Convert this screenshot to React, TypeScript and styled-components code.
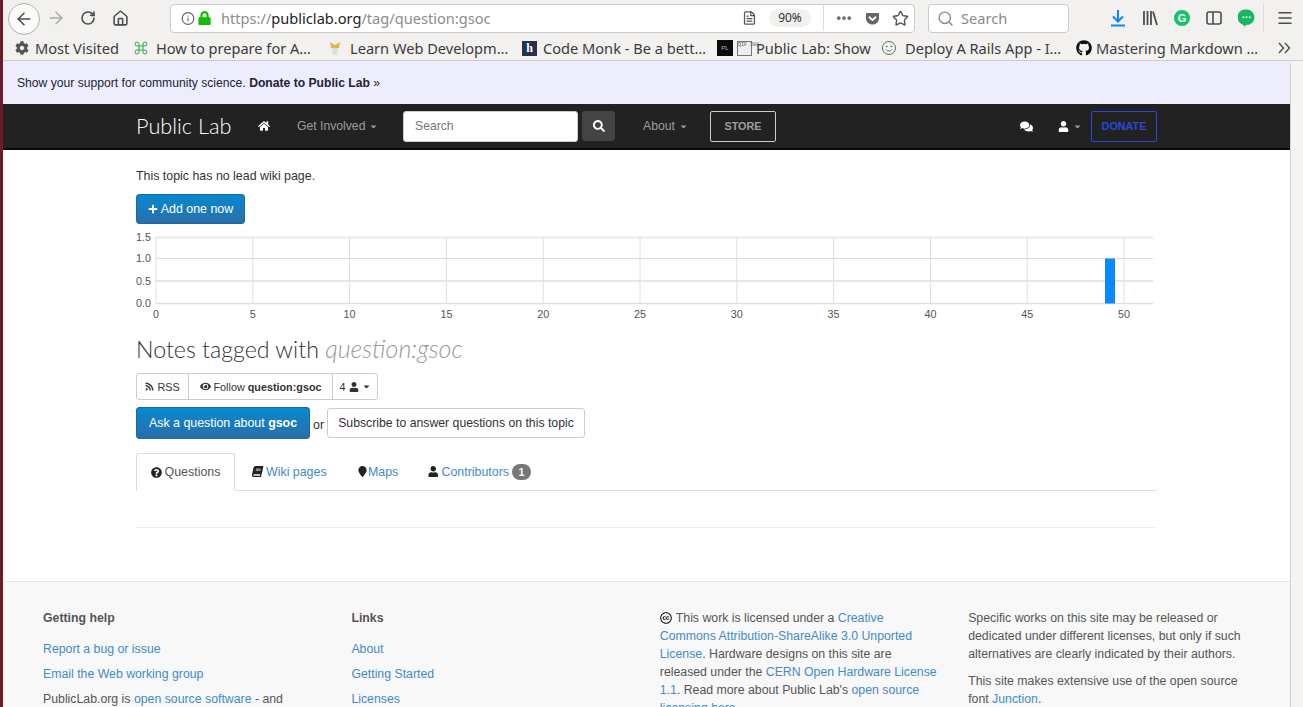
import React from 'react';
import styled, { createGlobalStyle } from 'styled-components';
import {
  FaBook,
  FaCaretDown,
  FaCog,
  FaComments,
  FaCreativeCommons,
  FaEye,
  FaGetPocket,
  FaGithub,
  FaHome,
  FaLock,
  FaMapMarker,
  FaPlus,
  FaQuestionCircle,
  FaRss,
  FaSearch,
  FaUser,
} from 'react-icons/fa';
import { ArrowLeft, ArrowRight, Command, FileText, Home, Info, Menu, MoreHorizontal, RotateCw, Search, Star } from 'lucide-react';

const GlobalStyle = createGlobalStyle`
  html, body {
    margin: 0;
    padding: 0;
    height: 707px;
    overflow: hidden;
    background: #fff;
  }
  * { box-sizing: border-box; }
  a { color: #428bca; text-decoration: none; }
`;

const Screen = styled.div`
  display: flex;
  height: 707px;
  width: 1303px;
  overflow: hidden;
  font-family: 'Liberation Sans', Arial, sans-serif;
  font-size: 12.4px;
  color: #333;
`;

const WindowEdge = styled.div`
  width: 3px;
  flex: none;
  background: #6d1b26;
`;

const Workspace = styled.div`
  flex: 1;
  min-width: 0;
  display: flex;
  flex-direction: column;
`;

/* browser chrome */
const Toolbar = styled.div`
  height: 36px;
  display: flex;
  align-items: center;
  background: #f2f1ef;
  padding-left: 5px;
  color: #4a4a4a;
`;

const BackCircle = styled.div`
  width: 32px;
  height: 32px;
  margin-top: 2px;
  border-radius: 50%;
  border: 1px solid #b5b3b0;
  background: #fbfbfa;
  display: flex;
  align-items: center;
  justify-content: center;
  color: #4a4a4a;
  flex: none;
`;

const ToolIcon = styled.div<{ $w: number; $color?: string }>`
  width: ${(p) => p.$w}px;
  flex: none;
  display: flex;
  justify-content: center;
  align-items: center;
  color: ${(p) => p.$color || '#4d4d4d'};
`;

const UrlBar = styled.div`
  width: 745px;
  height: 29px;
  margin-left: 34px;
  flex: none;
  display: flex;
  align-items: center;
  background: #fff;
  border: 1px solid #cdcbc8;
  border-radius: 4px;
  padding-left: 10px;
  color: #5a5a5a;
`;

const LockIcon = styled(FaLock)`
  margin-left: 3px;
  color: #12bc00;
`;

const UrlText = styled.span`
  font-family: 'Noto Sans', sans-serif;
  font-size: 14.6px;
  color: #8c8c8c;
  margin-left: 10px;
  width: 521px;
  flex: none;
  white-space: nowrap;
  strong { font-weight: 400; color: #222; }
`;

const ZoomPill = styled.span`
  width: 42px;
  height: 18px;
  margin-left: 12px;
  border-radius: 9px;
  background: #f0f0ef;
  font-family: 'Noto Sans', sans-serif;
  font-size: 12px;
  line-height: 18px;
  text-align: center;
  color: #333;
  flex: none;
`;

const UrlDivider = styled.span`
  width: 1px;
  height: 26px;
  background: #dedddb;
  margin: 0 6px 0 12px;
  flex: none;
`;

const SearchBox = styled.div`
  width: 141px;
  height: 29px;
  margin-left: 13px;
  margin-right: 33px;
  flex: none;
  display: flex;
  align-items: center;
  gap: 7px;
  background: #fff;
  border: 1px solid #cdcbc8;
  border-radius: 4px;
  padding-left: 8px;
  font-family: 'Noto Sans', sans-serif;
  font-size: 14.6px;
  color: #8a8a8a;
`;

const ToolDivider = styled.span`
  width: 1px;
  height: 28px;
  background: #dcdbd8;
  margin: 0 5px 0 1px;
  flex: none;
`;

const GrammarlyBadge = styled.span`
  width: 16px;
  height: 16px;
  border-radius: 50%;
  background: #15c26b;
  color: #fff;
  font: bold 11px/16px 'Liberation Sans', sans-serif;
  text-align: center;
`;

const BookmarksBar = styled.div`
  height: 25px;
  display: flex;
  align-items: center;
  background: #f2f1ef;
  border-bottom: 1px solid #cfcdc9;
  padding-left: 12px;
  font-family: 'Noto Sans', sans-serif;
  font-size: 14.6px;
  color: #3b3b3b;
`;

const Bookmark = styled.div<{ $w: number; $gap?: number }>`
  width: ${(p) => p.$w}px;
  flex: none;
  display: flex;
  align-items: center;
  gap: ${(p) => p.$gap ?? 7}px;
  white-space: nowrap;
  overflow: hidden;
`;

const FaviconH = styled.span`
  width: 15px;
  height: 15px;
  background: #27304f;
  color: #fff;
  font: bold 12px/15px 'Liberation Serif', serif;
  text-align: center;
  flex: none;
`;

const FaviconPL = styled.span`
  width: 16px;
  height: 16px;
  background: #0c0c0c;
  color: #bbb;
  font: 6px/16px 'Liberation Sans', sans-serif;
  text-align: center;
  flex: none;
`;

const FaviconQif = styled.span`
  width: 15px;
  height: 15px;
  border: 1px solid #777;
  background: #eee;
  color: #555;
  font: 5px/6px 'Liberation Mono', monospace;
  text-align: center;
  flex: none;
`;

/* page viewport */
const Viewport = styled.div`
  flex: 1;
  min-height: 0;
  display: flex;
`;

const Page = styled.div`
  flex: 1;
  min-width: 0;
  overflow: hidden;
  background: #fff;
`;

const ScrollTrack = styled.div`
  width: 13px;
  flex: none;
  background: #f5f4f2;
  border-left: 1px solid #d3d1cd;
  border-top-left-radius: 4px;
`;

const Banner = styled.div`
  height: 43px;
  background: #eeedfd;
  padding-left: 14px;
  line-height: 44px;
  font-size: 12.15px;
  color: #222238;
`;

const NavBar = styled.nav`
  height: 46px;
  background: #222;
  border-bottom: 2px solid #080808;
  padding-left: 133px;
  display: flex;
  align-items: center;
  color: #9d9d9d;
`;

const Brand = styled.span`
  font-family: Lato, sans-serif;
  font-weight: 300;
  font-size: 21.7px;
  color: #fff;
  width: 122px;
  flex: none;
`;

const NavLink = styled.span<{ $w: number; $end?: boolean; $pad?: number }>`
  width: ${(p) => p.$w}px;
  flex: none;
  display: flex;
  align-items: center;
  justify-content: ${(p) => (p.$end ? 'flex-end' : 'flex-start')};
  padding-right: ${(p) => p.$pad ?? 0}px;
  gap: 4px;
  font-size: 12.2px;
  white-space: nowrap;
`;

const NavSearchInput = styled.div`
  width: 175px;
  height: 31px;
  flex: none;
  background: #fff;
  border: 1px solid #ccc;
  border-radius: 3px;
  padding-left: 11px;
  line-height: 29px;
  font-size: 12.2px;
  color: #777;
`;

const NavSearchButton = styled.div`
  width: 33px;
  height: 30px;
  margin: 0 28px 0 4px;
  flex: none;
  background: #444;
  border-radius: 3px;
  display: flex;
  align-items: center;
  justify-content: center;
  color: #fff;
`;

const OutlineButton = styled.span<{ $color: string; $text: string; $w: number }>`
  width: ${(p) => p.$w}px;
  height: 31px;
  flex: none;
  border: 1px solid ${(p) => p.$color};
  border-radius: 2px;
  color: ${(p) => p.$text};
  font-size: 10.8px;
  font-weight: bold;
  line-height: 29px;
  text-align: center;
`;

const Container = styled.div`
  width: 1021px;
  margin-left: 133px;
`;

const LeadText = styled.p`
  margin: 17px 0 9px;
  line-height: 18px;
`;

const PrimaryButton = styled.span<{ $w: number; $h: number }>`
  display: inline-flex;
  align-items: center;
  justify-content: center;
  gap: 3px;
  width: ${(p) => p.$w}px;
  height: ${(p) => p.$h}px;
  border: 1px solid #1c6aa3;
  border-radius: 3px;
  background: linear-gradient(#0689cf, #2b6ea9);
  color: #fff;
  flex: none;
`;

const ChartSvg = styled.svg`
  display: block;
  width: 1021px;
  height: 95px;
  margin-top: 4px;
  text {
    font-family: 'Liberation Sans', sans-serif;
    font-size: 10.8px;
    fill: #545454;
  }
`;

const Heading = styled.h2`
  margin: 9px 0 0;
  height: 41px;
  font-family: Lato, sans-serif;
  font-weight: 300;
  font-size: 23.2px;
  line-height: 32px;
  color: #333;
  em { color: #999; font-style: italic; font-size: 25px; }
`;

const ButtonGroup = styled.div`
  display: flex;
  height: 27px;
`;

const GroupButton = styled.span<{ $w: number }>`
  width: ${(p) => p.$w}px;
  flex: none;
  display: flex;
  align-items: center;
  justify-content: center;
  gap: 3px;
  font-size: 10.8px;
  color: #333;
  border: 1px solid #ccc;
  margin-left: -1px;
  &:first-child { margin-left: 0; border-radius: 3px 0 0 3px; }
  &:last-child { border-radius: 0 3px 3px 0; }
`;

const AskRow = styled.div`
  display: flex;
  align-items: center;
  margin-top: 7px;
`;

const OrText = styled.span`
  width: 17px;
  margin-top: 3px;
  text-align: center;
  flex: none;
`;

const DefaultButton = styled.span`
  width: 258px;
  height: 30px;
  flex: none;
  border: 1px solid #ccc;
  border-radius: 3px;
  line-height: 28px;
  text-align: center;
  font-size: 12.25px;
`;

const Tabs = styled.div`
  display: flex;
  height: 38px;
  margin-top: 14px;
  width: 1021px;
  border-bottom: 1px solid #ddd;
`;

const Tab = styled.div<{ $active?: boolean; $w: number; $pad?: number; $gap?: number }>`
  width: ${(p) => p.$w}px;
  flex: none;
  height: ${(p) => (p.$active ? '38px' : '37px')};
  display: flex;
  align-items: center;
  justify-content: ${(p) => (p.$active ? 'center' : 'flex-start')};
  padding-left: ${(p) => p.$pad ?? (p.$active ? 0 : 16)}px;
  gap: ${(p) => p.$gap ?? 3}px;
  background: #fff;
  color: #428bca;
  border: 1px solid ${(p) => (p.$active ? '#ddd' : 'transparent')};
  border-bottom-color: ${(p) => (p.$active ? '#fff' : 'transparent')};
  border-radius: 3px 3px 0 0;
  svg { color: #222; }
`;

const SlantedBook = styled(FaBook)`
  transform: skewX(-12deg);
`;

const ActiveTabLabel = styled.span`
  color: #555;
`;

const CountBadge = styled.span`
  min-width: 19px;
  height: 16px;
  border-radius: 8px;
  background: #777;
  color: #fff;
  font-size: 10.8px;
  font-weight: bold;
  line-height: 16px;
  text-align: center;
`;

const Rule = styled.hr`
  border: 0;
  border-top: 1px solid #eee;
  margin: 36px 0 0;
`;

const Footer = styled.footer`
  margin-top: 53px;
  background: #f8f8f8;
  border-top: 1px solid #e7e7e7;
  padding: 27px 0 0 40px;
  display: grid;
  grid-template-columns: repeat(4, 308.4px);
  color: #555;
  font-size: 12.3px;
  line-height: 18px;
`;

const FooterColumn = styled.div`
  padding-right: 27px;
`;

const FooterTitle = styled.div`
  font-weight: bold;
  margin-bottom: 13px;
`;

const FooterLine = styled.div`
  margin-bottom: 7px;
`;

const FooterParagraph = styled.p`
  margin: 0 0 9px;
`;

const CcIcon = styled(FaCreativeCommons)`
  color: #111;
  vertical-align: -2px;
  margin-right: 4px;
`;

const ticks = [0, 5, 10, 15, 20, 25, 30, 35, 40, 45, 50];
const yTicks = [
  { label: '1.5', y: 9.5, width: 2, color: '#e9e9e9' },
  { label: '1.0', y: 30.5, width: 1, color: '#dcdcdc' },
  { label: '0.5', y: 53, width: 2, color: '#e6e6e6' },
  { label: '0.0', y: 75.5, width: 1.5, color: '#dedede' },
];
const tickX = (n: number) => 20 + n * 19.36;

function TagChart() {
  return (
    <ChartSvg viewBox="0 0 1021 95">
      {yTicks.map((t) => (
        <g key={t.label}>
          <line x1={20} x2={1017} y1={t.y} y2={t.y} stroke={t.color} strokeWidth={t.width} />
          <text x={15} y={t.y + 3.5} textAnchor="end">{t.label}</text>
        </g>
      ))}
      {ticks.map((n) => (
        <g key={n}>
          <line x1={tickX(n)} x2={tickX(n)} y1={9} y2={75.5} stroke="#dedede" strokeWidth={1} />
          <text x={tickX(n)} y={90} textAnchor="middle">{n}</text>
        </g>
      ))}
      <rect x={969} y={30.5} width={10} height={45} fill="#0a88ff" />
    </ChartSvg>
  );
}

export default function App() {
  return (
    <>
      <GlobalStyle />
      <Screen>
        <WindowEdge />
        <Workspace>
          <Toolbar>
            <BackCircle><ArrowLeft size={20} strokeWidth={1.8} /></BackCircle>
            <ToolIcon $w={32} $color="#a9a9a9"><ArrowRight size={20} strokeWidth={1.8} /></ToolIcon>
            <ToolIcon $w={32}><RotateCw size={16} strokeWidth={2.4} /></ToolIcon>
            <ToolIcon $w={32}><Home size={17} strokeWidth={2.2} /></ToolIcon>
            <UrlBar>
              <Info size={15} color="#666" />
              <LockIcon size={14} />
              <UrlText>https://<strong>publiclab.org</strong>/tag/question:gsoc</UrlText>
              <FileText size={16} color="#555" />
              <ZoomPill>90%</ZoomPill>
              <UrlDivider />
              <ToolIcon $w={28}><MoreHorizontal size={18} strokeWidth={3} color="#666" /></ToolIcon>
              <ToolIcon $w={28}><FaGetPocket size={15} color="#666" /></ToolIcon>
              <ToolIcon $w={28}><Star size={17} color="#555" strokeWidth={2} /></ToolIcon>
            </UrlBar>
            <SearchBox><Search size={17} color="#8a8a8a" />Search</SearchBox>
            <ToolIcon $w={32} $color="#0a84ff">
              <svg width="16" height="18" viewBox="0 0 16 18" fill="none" stroke="currentColor" strokeWidth="2">
                <path d="M8 1v11M3 7.5l5 5 5-5M1 16.5h14" />
              </svg>
            </ToolIcon>
            <ToolIcon $w={32}>
              <svg width="16" height="16" viewBox="0 0 16 16" fill="none" stroke="currentColor" strokeWidth="1.8">
                <path d="M2 1v14M5.5 1v14M9 1v14M11 1.5l4 13.5" />
              </svg>
            </ToolIcon>
            <ToolIcon $w={32}><GrammarlyBadge>G</GrammarlyBadge></ToolIcon>
            <ToolIcon $w={32}>
              <svg width="16" height="16" viewBox="0 0 16 16" fill="none" stroke="currentColor" strokeWidth="1.6">
                <rect x="1" y="2" width="14" height="12" rx="2" />
                <path d="M7 2v12" />
              </svg>
            </ToolIcon>
            <ToolIcon $w={32} $color="#15b85f">
              <svg width="17" height="18" viewBox="0 0 17 18">
                <path d="M8.5 0.5a8 7.8 0 0 1 0 15.6h-1v2l-3-2.6a8 7.8 0 0 1 4-15z" fill="currentColor" />
                <circle cx="5.3" cy="8.3" r="1" fill="#fff" />
                <circle cx="8.5" cy="8.3" r="1" fill="#fff" />
                <circle cx="11.7" cy="8.3" r="1" fill="#fff" />
              </svg>
            </ToolIcon>
            <ToolDivider />
            <ToolIcon $w={32}><Menu size={18} strokeWidth={2} /></ToolIcon>
          </Toolbar>
          <BookmarksBar>
            <Bookmark $w={118} $gap={6}><FaCog size={14} color="#555" /><span>Most Visited</span></Bookmark>
            <Bookmark $w={194}>
              <Command size={16} color="#3aa757" strokeWidth={1.5} />
              <span>How to prepare for A…</span>
            </Bookmark>
            <Bookmark $w={195}>
              <svg width="16" height="16" viewBox="0 0 16 16">
                <path d="M3 2l5 3 5-3-1 6H4z" fill="#e2b84a" />
                <path d="M5 8h6l-1 7H6z" fill="#dedcd4" />
              </svg>
              <span>Learn Web Developm…</span>
            </Bookmark>
            <Bookmark $w={195} $gap={6}><FaviconH>h</FaviconH><span>Code Monk - Be a bett…</span></Bookmark>
            <Bookmark $w={164} $gap={4}>
              <FaviconPL>PL</FaviconPL>
              <FaviconQif>QIF 388</FaviconQif>
              <span>Public Lab: Show</span>
            </Bookmark>
            <Bookmark $w={195} $gap={8}>
              <svg width="16" height="16" viewBox="0 0 16 16" fill="#bdebd6" stroke="#555" strokeWidth="0.9">
                <circle cx="8" cy="8" r="6.5" fill="#eefaf4" />
                <path d="M5 9.5c1.5 2 4.5 2 6 0" fill="none" />
                <circle cx="5.8" cy="6.5" r="0.5" />
                <circle cx="10.2" cy="6.5" r="0.5" />
              </svg>
              <span>Deploy A Rails App - I…</span>
            </Bookmark>
            <Bookmark $w={200} $gap={4}><FaGithub size={16} color="#111" /><span>Mastering Markdown …</span></Bookmark>
            <ToolIcon $w={16}>
              <svg width="13" height="12" viewBox="0 0 13 12" fill="none" stroke="#555" strokeWidth="1.5">
                <path d="M1 1l4.5 5-4.5 5M7 1l4.5 5-4.5 5" />
              </svg>
            </ToolIcon>
          </BookmarksBar>
          <Viewport>
            <Page>
              <Banner>Show your support for community science. <b>Donate to Public Lab</b> »</Banner>
              <NavBar>
                <Brand>Public Lab</Brand>
                <NavLink $w={39}><FaHome size={12} color="#fff" /></NavLink>
                <NavLink $w={106}>Get Involved <FaCaretDown size={9} /></NavLink>
                <NavSearchInput>Search</NavSearchInput>
                <NavSearchButton><FaSearch size={12} /></NavSearchButton>
                <NavLink $w={67}>About <FaCaretDown size={9} /></NavLink>
                <OutlineButton $color="#ccc" $text="#9d9d9d" $w={66}>STORE</OutlineButton>
                <NavLink $w={257} $end><FaComments size={13} color="#fff" /></NavLink>
                <NavLink $w={58} $end $pad={9}><FaUser size={11} color="#fff" /><FaCaretDown size={9} /></NavLink>
                <OutlineButton $color="#2a47d8" $text="#2a47d8" $w={66}>DONATE</OutlineButton>
              </NavBar>
              <Container>
                <LeadText>This topic has no lead wiki page.</LeadText>
                <PrimaryButton $w={109} $h={30}><FaPlus size={10} /><span>Add one now</span></PrimaryButton>
                <TagChart />
                <Heading>Notes tagged with <em>question:gsoc</em></Heading>
                <ButtonGroup>
                  <GroupButton $w={53}><FaRss size={9} />RSS</GroupButton>
                  <GroupButton $w={145}><FaEye size={11} /><span>Follow <b>question:gsoc</b></span></GroupButton>
                  <GroupButton $w={46}>4 <FaUser size={10} /><FaCaretDown size={9} /></GroupButton>
                </ButtonGroup>
                <AskRow>
                  <PrimaryButton $w={174} $h={32}><span>Ask a question about <b>gsoc</b></span></PrimaryButton>
                  <OrText>or</OrText>
                  <DefaultButton>Subscribe to answer questions on this topic</DefaultButton>
                </AskRow>
                <Tabs>
                  <Tab $active $w={99}><FaQuestionCircle size={11} /><ActiveTabLabel>Questions</ActiveTabLabel></Tab>
                  <Tab $w={107}><SlantedBook size={11} />Wiki pages</Tab>
                  <Tab $w={70} $pad={14} $gap={0}><FaMapMarker size={11} />Maps</Tab>
                  <Tab $w={120} $pad={15}><FaUser size={11} />Contributors<CountBadge>1</CountBadge></Tab>
                </Tabs>
                <Rule />
              </Container>
              <Footer>
                <FooterColumn>
                  <FooterTitle>Getting help</FooterTitle>
                  <FooterLine><a>Report a bug or issue</a></FooterLine>
                  <FooterLine><a>Email the Web working group</a></FooterLine>
                  <FooterLine>PublicLab.org is <a>open source software</a> - and</FooterLine>
                </FooterColumn>
                <FooterColumn>
                  <FooterTitle>Links</FooterTitle>
                  <FooterLine><a>About</a></FooterLine>
                  <FooterLine><a>Getting Started</a></FooterLine>
                  <FooterLine><a>Licenses</a></FooterLine>
                </FooterColumn>
                <FooterColumn>
                  <CcIcon size={12} />This work is licensed under a <a>Creative Commons Attribution-ShareAlike 3.0 Unported License</a>. Hardware designs on this site are released under the <a>CERN Open Hardware License 1.1</a>. Read more about Public Lab's <a>open source licensing here</a>.
                </FooterColumn>
                <FooterColumn>
                  <FooterParagraph>Specific works on this site may be released or dedicated under different licenses, but only if such alternatives are clearly indicated by their authors.</FooterParagraph>
                  <FooterParagraph>This site makes extensive use of the open source font <a>Junction</a>.</FooterParagraph>
                </FooterColumn>
              </Footer>
            </Page>
            <ScrollTrack />
          </Viewport>
        </Workspace>
      </Screen>
    </>
  );
}
